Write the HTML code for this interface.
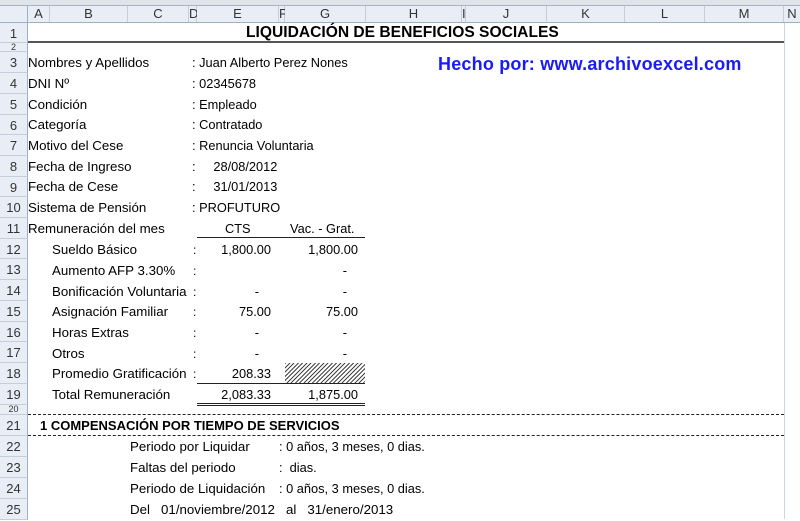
<!DOCTYPE html>
<html><head><meta charset="utf-8"><style>
body{margin:0;width:800px;height:519px;overflow:hidden;background:#fff;font-family:"Liberation Sans",Arial,sans-serif;position:relative}
.a{position:absolute;white-space:nowrap;line-height:16px}
.t{font-size:13.3px;color:#000}
.s{font-size:12px}
.v{font-size:12.8px}
.r{text-align:right}
.ch{position:absolute;top:6px;height:16px;font-size:13px;color:#333;text-align:center;line-height:16px;border-right:1px solid #c5cdd8;background:#e9eef6}
.rh{position:absolute;left:0;width:27px;font-size:13px;color:#333;text-align:center;background:#e9eef6;border-bottom:1px solid #c5cdd8;border-right:1px solid #9eb0c8}
</style></head><body>
<div style="position:absolute;left:0;top:0;width:800px;height:5px;background:#dfe4ea;border-bottom:1px solid #aab4c0"></div>
<div class="ch" style="left:0;width:27px;border-right:1px solid #9eb0c8"></div>
<div class="ch" style="left:28px;width:21px">A</div>
<div class="ch" style="left:50px;width:77px">B</div>
<div class="ch" style="left:128px;width:60px">C</div>
<div class="ch" style="left:189px;width:7px">D</div>
<div class="ch" style="left:197px;width:81px">E</div>
<div class="ch" style="left:279px;width:5px">F</div>
<div class="ch" style="left:285px;width:80px">G</div>
<div class="ch" style="left:366px;width:95px">H</div>
<div class="ch" style="left:462px;width:3px">I</div>
<div class="ch" style="left:466px;width:80px">J</div>
<div class="ch" style="left:547px;width:77px">K</div>
<div class="ch" style="left:625px;width:79px">L</div>
<div class="ch" style="left:705px;width:78px">M</div>
<div class="ch" style="left:784px;width:16px;border-right:none">N</div>
<div style="position:absolute;left:0;top:22px;width:800px;height:1px;background:#9eb0c8"></div>

<div class="rh" style="top:23px;height:19px;line-height:21px">1</div>
<div class="rh" style="top:43px;height:8px;line-height:8px;font-size:9px;overflow:hidden">2</div>
<div class="rh" style="top:52px;height:20px;line-height:22px">3</div>
<div class="rh" style="top:73px;height:20px;line-height:22px">4</div>
<div class="rh" style="top:94px;height:20px;line-height:22px">5</div>
<div class="rh" style="top:115px;height:19px;line-height:22px">6</div>
<div class="rh" style="top:135px;height:20px;line-height:22px">7</div>
<div class="rh" style="top:156px;height:20px;line-height:22px">8</div>
<div class="rh" style="top:177px;height:19px;line-height:22px">9</div>
<div class="rh" style="top:197px;height:20px;line-height:22px">10</div>
<div class="rh" style="top:218px;height:20px;line-height:22px">11</div>
<div class="rh" style="top:239px;height:19px;line-height:22px">12</div>
<div class="rh" style="top:259px;height:20px;line-height:22px">13</div>
<div class="rh" style="top:280px;height:20px;line-height:22px">14</div>
<div class="rh" style="top:301px;height:20px;line-height:22px">15</div>
<div class="rh" style="top:322px;height:19px;line-height:22px">16</div>
<div class="rh" style="top:342px;height:20px;line-height:22px">17</div>
<div class="rh" style="top:363px;height:20px;line-height:22px">18</div>
<div class="rh" style="top:384px;height:20px;line-height:22px">19</div>
<div class="rh" style="top:405px;height:9px;line-height:8px;font-size:9px;overflow:hidden">20</div>
<div class="rh" style="top:415px;height:20px;line-height:22px">21</div>
<div class="rh" style="top:436px;height:20px;line-height:22px">22</div>
<div class="rh" style="top:457px;height:20px;line-height:22px">23</div>
<div class="rh" style="top:478px;height:20px;line-height:22px">24</div>
<div class="rh" style="top:499px;height:20px;line-height:22px">25</div>

<div class="a" style="left:246px;top:24px;font-size:15.6px;font-weight:bold;line-height:18px">LIQUIDACIÓN DE BENEFICIOS SOCIALES</div>
<div style="position:absolute;left:28px;top:41px;width:756px;height:2px;background:#555"></div>
<div class="a" style="left:438px;top:54px;font-size:18px;font-weight:bold;color:#1a1aff;line-height:21px;letter-spacing:0.2px">Hecho por: www.archivoexcel.com</div>

<div class="a t" style="left:28px;top:55px">Nombres y Apellidos</div><div class="a v" style="left:192px;top:55px">: Juan Alberto Perez Nones</div>
<div class="a t" style="left:28px;top:76px">DNI Nº</div><div class="a v" style="left:192px;top:76px">: 02345678</div>
<div class="a t" style="left:28px;top:97px">Condición</div><div class="a v" style="left:192px;top:97px">: Empleado</div>
<div class="a t" style="left:28px;top:117px">Categoría</div><div class="a v" style="left:192px;top:117px">: Contratado</div>
<div class="a t" style="left:28px;top:138px">Motivo del Cese</div><div class="a v" style="left:192px;top:138px">: Renuncia Voluntaria</div>
<div class="a t" style="left:28px;top:159px">Fecha de Ingreso</div><div class="a v" style="left:192px;top:159px">:&nbsp;&nbsp;&nbsp;&nbsp; 28/08/2012</div>
<div class="a t" style="left:28px;top:179px">Fecha de Cese</div><div class="a v" style="left:192px;top:179px">:&nbsp;&nbsp;&nbsp;&nbsp; 31/01/2013</div>
<div class="a t" style="left:28px;top:200px">Sistema de Pensión</div><div class="a v" style="left:192px;top:200px">: PROFUTURO</div>
<div class="a t" style="left:28px;top:221px">Remuneración del mes</div>
<div class="a v" style="left:225px;top:221px">CTS</div><div class="a v" style="left:290px;top:221px">Vac. - Grat.</div>
<div style="position:absolute;left:197px;top:237px;width:168px;height:1px;background:#222"></div>

<div class="a t" style="left:52px;top:242px">Sueldo Básico</div>
<div class="a t" style="left:52px;top:263px">Aumento AFP 3.30%</div>
<div class="a t" style="left:52px;top:284px">Bonificación Voluntaria</div>
<div class="a t" style="left:52px;top:304px">Asignación Familiar</div>
<div class="a t" style="left:52px;top:325px">Horas Extras</div>
<div class="a t" style="left:52px;top:346px">Otros</div>
<div class="a t" style="left:52px;top:366px">Promedio Gratificación</div>
<div class="a t" style="left:52px;top:387px">Total Remuneración</div>

<div class="a s" style="left:193px;top:242px">:</div><div class="a s" style="left:193px;top:263px">:</div><div class="a s" style="left:193px;top:284px">:</div><div class="a s" style="left:193px;top:304px">:</div><div class="a s" style="left:193px;top:325px">:</div><div class="a s" style="left:193px;top:346px">:</div><div class="a s" style="left:193px;top:366px">:</div>

<div class="a v r" style="left:197px;width:74px;top:242px">1,800.00</div><div class="a v r" style="left:285px;width:73px;top:242px">1,800.00</div>
<div class="a v r" style="left:285px;width:62px;top:263px">-</div>
<div class="a v r" style="left:197px;width:62px;top:284px">-</div><div class="a v r" style="left:285px;width:62px;top:284px">-</div>
<div class="a v r" style="left:197px;width:74px;top:304px">75.00</div><div class="a v r" style="left:285px;width:73px;top:304px">75.00</div>
<div class="a v r" style="left:197px;width:62px;top:325px">-</div><div class="a v r" style="left:285px;width:62px;top:325px">-</div>
<div class="a v r" style="left:197px;width:62px;top:346px">-</div><div class="a v r" style="left:285px;width:62px;top:346px">-</div>
<div class="a v r" style="left:197px;width:74px;top:366px">208.33</div>
<div style="position:absolute;left:285px;top:363px;width:80px;height:20px;background:repeating-linear-gradient(135deg,#444 0 1px,#fff 1px 3px)"></div>
<div style="position:absolute;left:197px;top:383px;width:168px;height:1px;background:#222"></div>
<div class="a v r" style="left:197px;width:74px;top:387px">2,083.33</div><div class="a v r" style="left:285px;width:73px;top:387px">1,875.00</div>
<div style="position:absolute;left:197px;top:403px;width:168px;height:1px;background:#222"></div>
<div style="position:absolute;left:197px;top:405px;width:168px;height:1px;background:#222"></div>

<div style="position:absolute;left:28px;top:414px;width:756px;border-top:1px dashed #222"></div>
<div class="a" style="left:40px;top:418px;font-size:13px;font-weight:bold">1 COMPENSACIÓN POR TIEMPO DE SERVICIOS</div>
<div style="position:absolute;left:28px;top:435px;width:756px;border-top:1px dashed #222"></div>

<div class="a t" style="left:130px;top:439px">Periodo por Liquidar</div><div class="a v" style="left:279px;top:439px">: 0 años, 3 meses, 0 dias.</div>
<div class="a t" style="left:130px;top:460px">Faltas del periodo</div><div class="a v" style="left:279px;top:460px">:&nbsp; dias.</div>
<div class="a t" style="left:130px;top:481px">Periodo de Liquidación</div><div class="a v" style="left:279px;top:481px">: 0 años, 3 meses, 0 dias.</div>
<div class="a t" style="left:130px;top:502px">Del&nbsp;&nbsp; 01/noviembre/2012&nbsp;&nbsp; al&nbsp;&nbsp; 31/enero/2013</div>
<div style="position:absolute;left:784px;top:23px;width:1px;height:496px;background:#d0d6de"></div>
</body></html>
